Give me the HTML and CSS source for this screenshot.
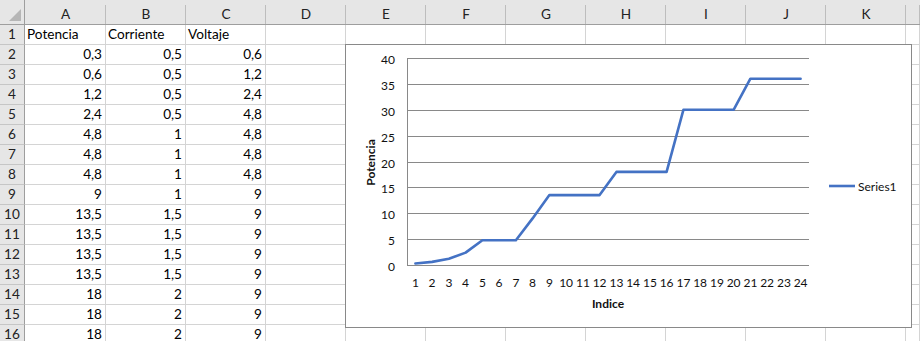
FILE: index.html
```html
<!DOCTYPE html>
<html lang="es">
<head>
<meta charset="utf-8">
<title>Hoja</title>
<link rel="stylesheet" href="styles.css">
</head>
<body>
<div class="sheet">
  <div class="grid">
    <div class="corner"><svg class="tri" width="12" height="12" viewBox="0 0 12 12"><polygon points="12,0 12,12 0,12" fill="#b6b6b6"/></svg></div>
    <div class="h">A</div><div class="h">B</div><div class="h">C</div><div class="h">D</div><div class="h">E</div><div class="h">F</div><div class="h">G</div><div class="h">H</div><div class="h">I</div><div class="h">J</div><div class="h">K</div><div class="h"></div>

    <div class="r">1</div><div class="c">Potencia</div><div class="c">Corriente</div><div class="c">Voltaje</div><div class="c"></div><div class="c"></div><div class="c"></div><div class="c"></div><div class="c"></div><div class="c"></div><div class="c"></div><div class="c"></div><div class="c"></div>
    <div class="r">2</div><div class="c n">0,3</div><div class="c n">0,5</div><div class="c n">0,6</div><div class="c"></div><div class="c"></div><div class="c"></div><div class="c"></div><div class="c"></div><div class="c"></div><div class="c"></div><div class="c"></div><div class="c"></div>
    <div class="r">3</div><div class="c n">0,6</div><div class="c n">0,5</div><div class="c n">1,2</div><div class="c"></div><div class="c"></div><div class="c"></div><div class="c"></div><div class="c"></div><div class="c"></div><div class="c"></div><div class="c"></div><div class="c"></div>
    <div class="r">4</div><div class="c n">1,2</div><div class="c n">0,5</div><div class="c n">2,4</div><div class="c"></div><div class="c"></div><div class="c"></div><div class="c"></div><div class="c"></div><div class="c"></div><div class="c"></div><div class="c"></div><div class="c"></div>
    <div class="r">5</div><div class="c n">2,4</div><div class="c n">0,5</div><div class="c n">4,8</div><div class="c"></div><div class="c"></div><div class="c"></div><div class="c"></div><div class="c"></div><div class="c"></div><div class="c"></div><div class="c"></div><div class="c"></div>
    <div class="r">6</div><div class="c n">4,8</div><div class="c n">1</div><div class="c n">4,8</div><div class="c"></div><div class="c"></div><div class="c"></div><div class="c"></div><div class="c"></div><div class="c"></div><div class="c"></div><div class="c"></div><div class="c"></div>
    <div class="r">7</div><div class="c n">4,8</div><div class="c n">1</div><div class="c n">4,8</div><div class="c"></div><div class="c"></div><div class="c"></div><div class="c"></div><div class="c"></div><div class="c"></div><div class="c"></div><div class="c"></div><div class="c"></div>
    <div class="r">8</div><div class="c n">4,8</div><div class="c n">1</div><div class="c n">4,8</div><div class="c"></div><div class="c"></div><div class="c"></div><div class="c"></div><div class="c"></div><div class="c"></div><div class="c"></div><div class="c"></div><div class="c"></div>
    <div class="r">9</div><div class="c n">9</div><div class="c n">1</div><div class="c n">9</div><div class="c"></div><div class="c"></div><div class="c"></div><div class="c"></div><div class="c"></div><div class="c"></div><div class="c"></div><div class="c"></div><div class="c"></div>
    <div class="r">10</div><div class="c n">13,5</div><div class="c n">1,5</div><div class="c n">9</div><div class="c"></div><div class="c"></div><div class="c"></div><div class="c"></div><div class="c"></div><div class="c"></div><div class="c"></div><div class="c"></div><div class="c"></div>
    <div class="r">11</div><div class="c n">13,5</div><div class="c n">1,5</div><div class="c n">9</div><div class="c"></div><div class="c"></div><div class="c"></div><div class="c"></div><div class="c"></div><div class="c"></div><div class="c"></div><div class="c"></div><div class="c"></div>
    <div class="r">12</div><div class="c n">13,5</div><div class="c n">1,5</div><div class="c n">9</div><div class="c"></div><div class="c"></div><div class="c"></div><div class="c"></div><div class="c"></div><div class="c"></div><div class="c"></div><div class="c"></div><div class="c"></div>
    <div class="r">13</div><div class="c n">13,5</div><div class="c n">1,5</div><div class="c n">9</div><div class="c"></div><div class="c"></div><div class="c"></div><div class="c"></div><div class="c"></div><div class="c"></div><div class="c"></div><div class="c"></div><div class="c"></div>
    <div class="r">14</div><div class="c n">18</div><div class="c n">2</div><div class="c n">9</div><div class="c"></div><div class="c"></div><div class="c"></div><div class="c"></div><div class="c"></div><div class="c"></div><div class="c"></div><div class="c"></div><div class="c"></div>
    <div class="r">15</div><div class="c n">18</div><div class="c n">2</div><div class="c n">9</div><div class="c"></div><div class="c"></div><div class="c"></div><div class="c"></div><div class="c"></div><div class="c"></div><div class="c"></div><div class="c"></div><div class="c"></div>
    <div class="r">16</div><div class="c n">18</div><div class="c n">2</div><div class="c n">9</div><div class="c"></div><div class="c"></div><div class="c"></div><div class="c"></div><div class="c"></div><div class="c"></div><div class="c"></div><div class="c"></div><div class="c"></div>
  </div>

  <div class="chart">
    <svg class="plot" width="565" height="282" viewBox="1 1 565 282">
      <g class="grid-lines" stroke="#898989" stroke-width="1" shape-rendering="crispEdges">
        <line x1="62" y1="14.5" x2="464" y2="14.5"/>
        <line x1="62" y1="40.5" x2="464" y2="40.5"/>
        <line x1="62" y1="66.5" x2="464" y2="66.5"/>
        <line x1="62" y1="92.5" x2="464" y2="92.5"/>
        <line x1="62" y1="118.5" x2="464" y2="118.5"/>
        <line x1="62" y1="143.5" x2="464" y2="143.5"/>
        <line x1="62" y1="169.5" x2="464" y2="169.5"/>
        <line x1="62" y1="195.5" x2="464" y2="195.5"/>
        <line x1="62" y1="221.5" x2="464" y2="221.5"/>
        <line x1="62.5" y1="14" x2="62.5" y2="222"/>
      </g>
      <g class="ylab" text-anchor="end">
        <text x="50" y="19.5">40</text>
        <text x="50" y="45.5">35</text>
        <text x="50" y="71.5">30</text>
        <text x="50" y="97.5">25</text>
        <text x="50" y="123.5">20</text>
        <text x="50" y="148.5">15</text>
        <text x="50" y="174.5">10</text>
        <text x="50" y="200.5">5</text>
        <text x="50" y="226.5">0</text>
      </g>
      <g class="xlab" text-anchor="middle">
        <text x="70.4" y="243">1</text>
        <text x="87.1" y="243">2</text>
        <text x="103.9" y="243">3</text>
        <text x="120.6" y="243">4</text>
        <text x="137.4" y="243">5</text>
        <text x="154.1" y="243">6</text>
        <text x="170.9" y="243">7</text>
        <text x="187.6" y="243">8</text>
        <text x="204.4" y="243">9</text>
        <text x="221.1" y="243">10</text>
        <text x="237.9" y="243">11</text>
        <text x="254.6" y="243">12</text>
        <text x="271.4" y="243">13</text>
        <text x="288.1" y="243">14</text>
        <text x="304.9" y="243">15</text>
        <text x="321.6" y="243">16</text>
        <text x="338.4" y="243">17</text>
        <text x="355.1" y="243">18</text>
        <text x="371.9" y="243">19</text>
        <text x="388.6" y="243">20</text>
        <text x="405.4" y="243">21</text>
        <text x="422.1" y="243">22</text>
        <text x="438.9" y="243">23</text>
        <text x="455.6" y="243">24</text>
      </g>
      <text class="atitle" x="263" y="263.5" text-anchor="middle">Indice</text>
      <text class="atitle" x="0" y="0" text-anchor="middle" transform="translate(29.5 118.5) rotate(-90)">Potencia</text>
      <polyline class="series" fill="none" stroke="#4472c4" stroke-width="2.6" stroke-linejoin="round" stroke-linecap="round"
        points="70.4,219.5 87.1,217.9 103.9,214.8 120.6,208.6 137.4,196.2 154.1,196.2 170.9,196.2 187.6,174.4 204.4,151.1 221.1,151.1 237.9,151.1 254.6,151.1 271.4,127.9 288.1,127.9 304.9,127.9 321.6,127.9 338.4,65.8 355.1,65.8 371.9,65.8 388.6,65.8 405.4,34.7 422.1,34.7 438.9,34.7 455.6,34.7"/>
      <line x1="484" y1="142" x2="510" y2="142" stroke="#4472c4" stroke-width="2.6"/>
      <text class="legend" x="513" y="146.5">Series1</text>
    </svg>
  </div>
</div>
</body>
</html>
```

FILE: styles.css
```css
html, body {
  margin: 0;
  padding: 0;
  background: #ffffff;
  overflow: hidden;
}

body {
  width: 920px;
  height: 341px;
  font-family: Lato, "Open Sans", "Liberation Sans", sans-serif;
  font-size: 13.6px;
  color: #000;
}

.sheet {
  position: relative;
  width: 920px;
  height: 341px;
  overflow: hidden;
}

.grid {
  display: grid;
  grid-template-columns: 25px 81px repeat(10, 80px) 1fr;
  grid-template-rows: 25px repeat(16, 20px);
}

.corner {
  background: #e6e6e6;
  border-right: 1px solid #9e9e9e;
  border-bottom: 1px solid #9e9e9e;
  box-sizing: border-box;
  display: flex;
  align-items: flex-end;
  justify-content: flex-end;
  padding: 0 3px 3px 0;
}

.tri {
  display: block;
}

.h {
  box-sizing: border-box;
  background:
    linear-gradient(#bdbdbd, #bdbdbd) right bottom / 1px 19px no-repeat,
    #e6e6e6;
  border-bottom: 1px solid #9e9e9e;
  text-align: center;
  line-height: 19px;
  padding-top: 5px;
  color: #222;
}

.r {
  box-sizing: border-box;
  background: #e6e6e6;
  border-right: 1px solid #9e9e9e;
  border-bottom: 1px solid #c6c6c6;
  text-align: center;
  line-height: 19px;
  color: #222;
}

.c {
  box-sizing: border-box;
  border-right: 1px solid #d4d4d4;
  border-bottom: 1px solid #d4d4d4;
  line-height: 19px;
  padding: 0 3px 0 2px;
  white-space: nowrap;
  overflow: hidden;
}

.n {
  text-align: right;
}

.chart {
  position: absolute;
  left: 345px;
  top: 44px;
  width: 567px;
  height: 284px;
  box-sizing: border-box;
  border: 1px solid #898989;
  background: #ffffff;
}

.plot {
  display: block;
  font-family: Lato, "Open Sans", "Liberation Sans", sans-serif;
  font-size: 12px;
  fill: #111;
}

.atitle {
  font-weight: bold;
  font-size: 12px;
}

.legend {
  font-size: 12px;
}
```
